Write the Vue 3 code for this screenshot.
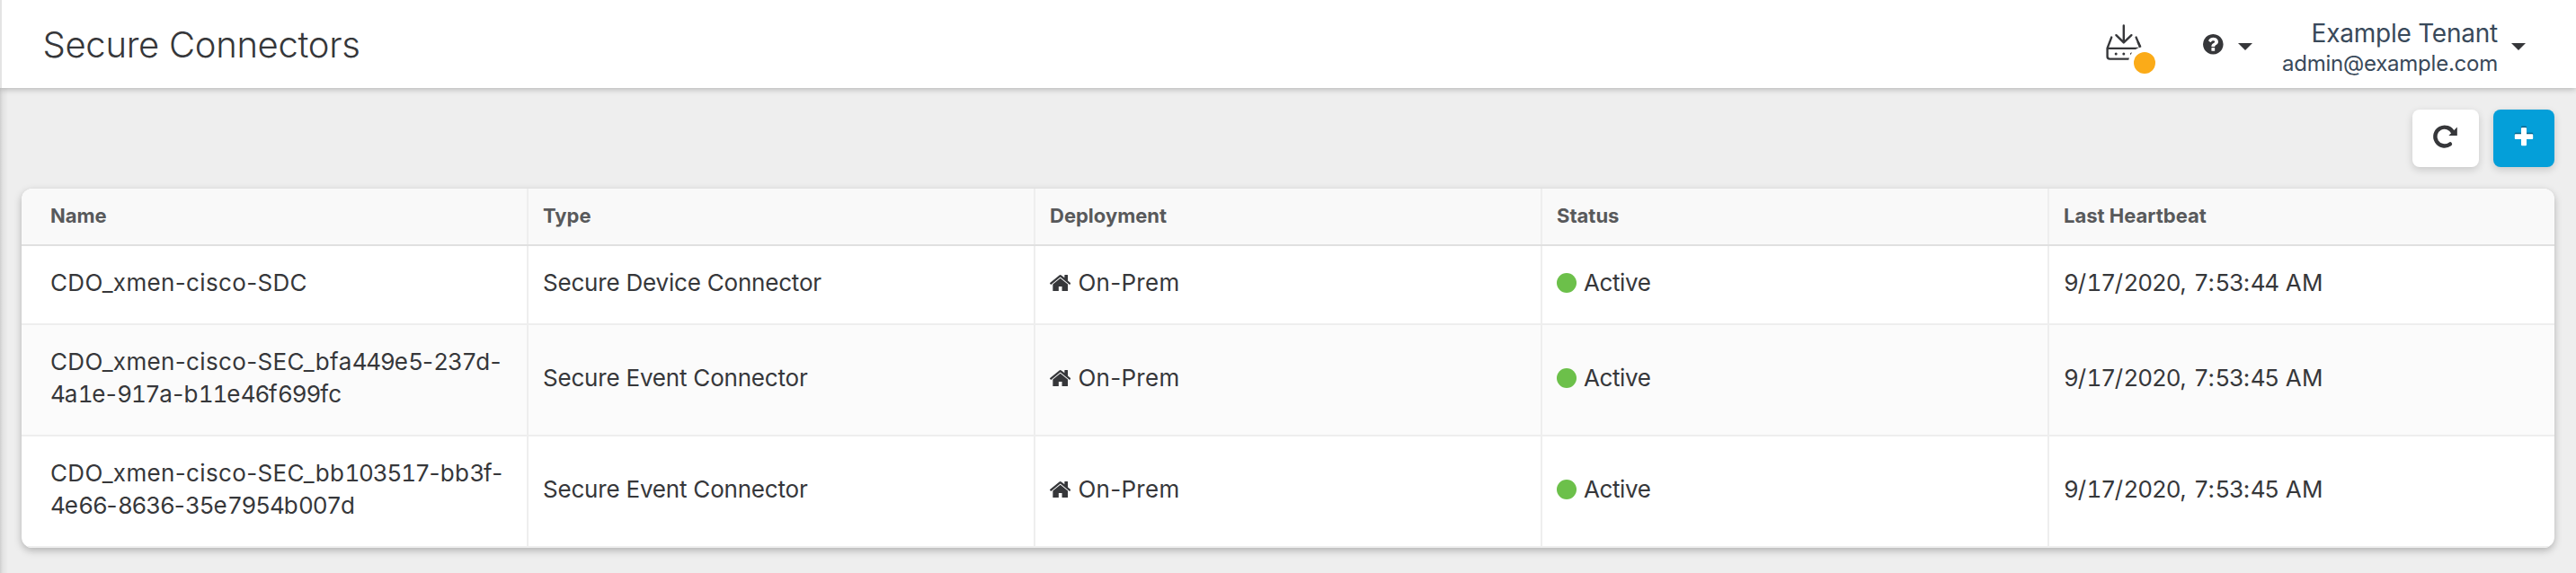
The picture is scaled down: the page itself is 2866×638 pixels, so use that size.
<script setup>
const columns = ['Name', 'Type', 'Deployment', 'Status', 'Last Heartbeat']
const rows = [
  { name: 'CDO_xmen-cisco-SDC', type: 'Secure Device Connector', time: '9/17/2020, 7:53:44 AM' },
  { name: 'CDO_xmen-cisco-SEC_bfa449e5-237d-4a1e-917a-b11e46f699fc', type: 'Secure Event Connector', time: '9/17/2020, 7:53:45 AM' },
  { name: 'CDO_xmen-cisco-SEC_bb103517-bb3f-4e66-8636-35e7954b007d', type: 'Secure Event Connector', time: '9/17/2020, 7:53:45 AM' },
]
// Odd entries are runs of digits, which are set on an even pitch.
const parts = (text) => text.split(/(\d+)/)
</script>

<template>
  <div class="page">
    <header class="topbar">
      <h1>Secure Connectors</h1>
      <div class="tools">
        <svg class="device" width="58" height="60" viewBox="2342 24 58 60">
          <g fill="none" stroke="#36373a" stroke-width="2.4" stroke-linecap="round" stroke-linejoin="round">
            <path d="M2362.8 28.4V47M2354.4 39.2L2362.8 47.4L2371.4 39.2" />
            <path d="M2349.2 41.6L2344.6 53.6V63Q2344.6 65.6 2347.4 65.6H2372M2376.6 41.6L2381.4 53M2344.8 53.9H2382V66" />
          </g>
          <g fill="#36373a">
            <circle cx="2354.2" cy="60" r="1.5" />
            <circle cx="2362.8" cy="60" r="1.5" />
            <circle cx="2371.4" cy="60" r="1.5" />
          </g>
          <circle cx="2386" cy="70" r="18" fill="#fff" />
          <path d="M2378.6 46.4L2381.2 52.4" stroke="#36373a" stroke-width="2.4" />
          <circle cx="2386" cy="70" r="12" fill="#fbab18" />
        </svg>
        <svg class="help" width="22.6" height="22.6" viewBox="128 128 1536 1536">
          <path fill="#36373a" d="M1024 1376v-192q0-14-9-23t-23-9h-192q-14 0-23 9t-9 23v192q0 14 9 23t23 9h192q14 0 23-9t9-23zm256-672q0-88-55.5-163t-138.5-116-170-41q-243 0-371 213-15 24 8 42l132 100q7 6 19 6 16 0 25-12 53-68 86-92 34-24 86-24 48 0 85.5 26t37.5 59q0 38-20 61t-68 45q-63 28-115.5 86.5t-52.5 125.5v36q0 14 9 23t23 9h192q14 0 23-9t9-23q0-19 21.5-49.5t54.5-49.5q32-18 49-28.5t46-35 44.5-48 28-60.5 12.5-81zm384 192q0 209-103 385.5t-279.5 279.5-385.5 103-385.5-103-279.5-279.5-103-385.5 103-385.5 279.5-279.5 385.5-103 385.5 103 279.5 279.5 103 385.5z" />
        </svg>
        <svg class="caret help-caret" width="16" height="8" viewBox="0 0 16 8"><path d="M0 0H16L8 8Z" fill="#36373a" /></svg>
        <div class="account">
          <div class="tenant">Example Tenant</div>
          <div class="email">admin@example.com</div>
        </div>
        <svg class="caret" width="16" height="8" viewBox="0 0 16 8"><path d="M0 0H16L8 8Z" fill="#36373a" /></svg>
      </div>
    </header>

    <main>
      <div class="actions">
        <button class="btn refresh" aria-label="Refresh">
          <svg width="28" height="28" viewBox="0 0 28 28">
            <path d="M18.9 22.4A10.4 10.4 0 1 1 22.2 9.7" fill="none" stroke="#36373a" stroke-width="4.4" stroke-linecap="round" />
            <path d="M26.8 3.4V13H17.4Z" fill="#36373a" />
          </svg>
        </button>
        <button class="btn add" aria-label="Add">
          <svg width="22" height="22" viewBox="0 0 22 22">
            <path transform="translate(0 -1.4)" d="M9 1h4q1 0 1 1v6.2h6.2q1 0 1 1v3.8q0 1-1 1H14v6.2q0 1-1 1H9q-1 0-1-1V14H1.8q-1 0-1-1V9.2q0-1 1-1H8V2q0-1 1-1z" fill="#03638a" />
            <path d="M9 1h4q1 0 1 1v6.2h6.2q1 0 1 1v3.8q0 1-1 1H14v6.2q0 1-1 1H9q-1 0-1-1V14H1.8q-1 0-1-1V9.2q0-1 1-1H8V2q0-1 1-1z" fill="#fff" />
          </svg>
        </button>
      </div>

      <div class="table">
        <div class="row head">
          <div v-for="c in columns" :key="c" class="cell">{{ c }}</div>
        </div>
        <div v-for="r in rows" :key="r.name" class="row body">
          <div class="cell">
            <div class="code"><span v-for="(p, i) in parts(r.name)" :key="i" :class="{ digits: i % 2 }">{{ p }}</span></div>
          </div>
          <div class="cell type">{{ r.type }}</div>
          <div class="cell">
            <svg class="home" width="23.4" height="18.6" viewBox="89 253 1614 1283">
              <path fill="#36373a" d="M1472 992v480q0 26-19 45t-45 19h-384v-384h-256v384h-384q-26 0-45-19t-19-45v-480q0-1 .5-3t.5-3l575-474 575 474q1 2 1 6zm223-69l-62 74q-8 9-21 11h-3q-13 0-21-7l-692-577-692 577q-12 8-24 7-13-2-21-11l-62-74q-8-10-7-23.5t11-21.5l719-599q32-26 76-26t76 26l244 204v-195q0-14 9-23t23-9h192q14 0 23 9t9 23v408l219 182q10 8 11 21.5t-7 23.5z" />
            </svg>
            <span class="deploy">On-Prem</span>
          </div>
          <div class="cell"><i class="dot"></i><span class="status">Active</span></div>
          <div class="cell">
            <div class="code"><span v-for="(p, i) in parts(r.time)" :key="i" :class="{ digits: i % 2 }">{{ p }}</span></div>
          </div>
        </div>
      </div>
    </main>
  </div>
</template>

<style>
body {
  background: #eee;
}
</style>

<style scoped>
.page {
  box-sizing: border-box;
  height: 638px;
  display: flex;
  flex-direction: column;
  font-family: Inter, "Liberation Sans", sans-serif;
  color: #36373a;
  background: linear-gradient(90deg, #cfcfcf, #e2e2e2 3px, #eee 9px);
  overflow: hidden;
}
.topbar {
  box-sizing: border-box;
  flex: none;
  height: 98px;
  display: flex;
  justify-content: space-between;
  align-items: center;
  padding: 1px 56px 0 45.5px;
  border-left: 2px solid #e4e4e4;
  background: #fff;
  box-shadow: 0 1px 7px rgba(0, 0, 0, 0.28);
}
h1 {
  margin: 0;
  font-size: 40px;
  line-height: 48px;
  font-weight: 300;
  letter-spacing: -0.3px;
}
.tools {
  display: flex;
  align-items: center;
  align-self: stretch;
}
.device {
  margin-top: 9px;
}
.help {
  margin-left: 51px;
}
.caret {
  margin: 5px 0 0 15px;
}
.help-caret {
  margin-left: 16.5px;
}
.account {
  margin: 6px 0 0 33px;
  color: #39495a;
  text-align: right;
  display: flex;
  flex-direction: column;
  gap: 2px;
  width: 240px;
}
.tenant {
  font-size: 28px;
  line-height: 34px;
  letter-spacing: -0.23px;
}
.email {
  font-size: 24px;
  line-height: 29px;
  letter-spacing: -0.23px;
}
main {
  padding: 24px 24px 28px;
}
.actions {
  display: flex;
  justify-content: flex-end;
  gap: 16px;
  margin-bottom: 24px;
}
.btn {
  height: 64px;
  padding: 0 0 4px;
  border: 0;
  border-radius: 8px;
  display: flex;
  align-items: center;
  justify-content: center;
  box-shadow: 0 3px 8px rgba(0, 0, 0, 0.16);
}
.btn svg {
  overflow: visible;
}
.refresh {
  width: 74px;
  background: #fff;
}
.add {
  width: 68px;
  background: #049fd9;
}
.table {
  border-radius: 12px;
  overflow: hidden;
  background: #fff;
  box-shadow: 0 3px 8px rgba(0, 0, 0, 0.26);
}
.row {
  display: grid;
  grid-template-columns: 564px 564px 564px 564px 1fr;
}
.cell {
  box-sizing: border-box;
  padding: 23px 16px 27px;
  border-right: 2px solid #eee;
  display: flex;
  align-items: center;
  min-width: 0;
}
.cell:first-child {
  padding-left: 32px;
  padding-right: 12px;
}
.cell:last-child {
  border-right: 0;
}
.head {
  background: #f9f9f9;
  border-bottom: 2px solid #e0e0e0;
  font-size: 22px;
  line-height: 26px;
  font-weight: 700;
  color: #58595b;
}
.head .cell {
  padding-top: 17px;
  padding-bottom: 19px;
}
.body {
  border-bottom: 2px solid #eee;
  font-size: 26px;
  line-height: 36px;
}
.body:nth-child(odd) {
  background: #fbfbfb;
}
.code {
  letter-spacing: 0.35px;
}
.digits {
  font-variant-numeric: tabular-nums;
  letter-spacing: -1.17px;
}
.type {
  letter-spacing: -0.2px;
}
.home {
  margin-right: 8px;
}
.deploy {
  letter-spacing: 0.28px;
}
.dot {
  width: 22px;
  height: 22px;
  border-radius: 50%;
  background: #6cc04a;
  margin-right: 8px;
}
.status {
  letter-spacing: -0.4px;
}
</style>
